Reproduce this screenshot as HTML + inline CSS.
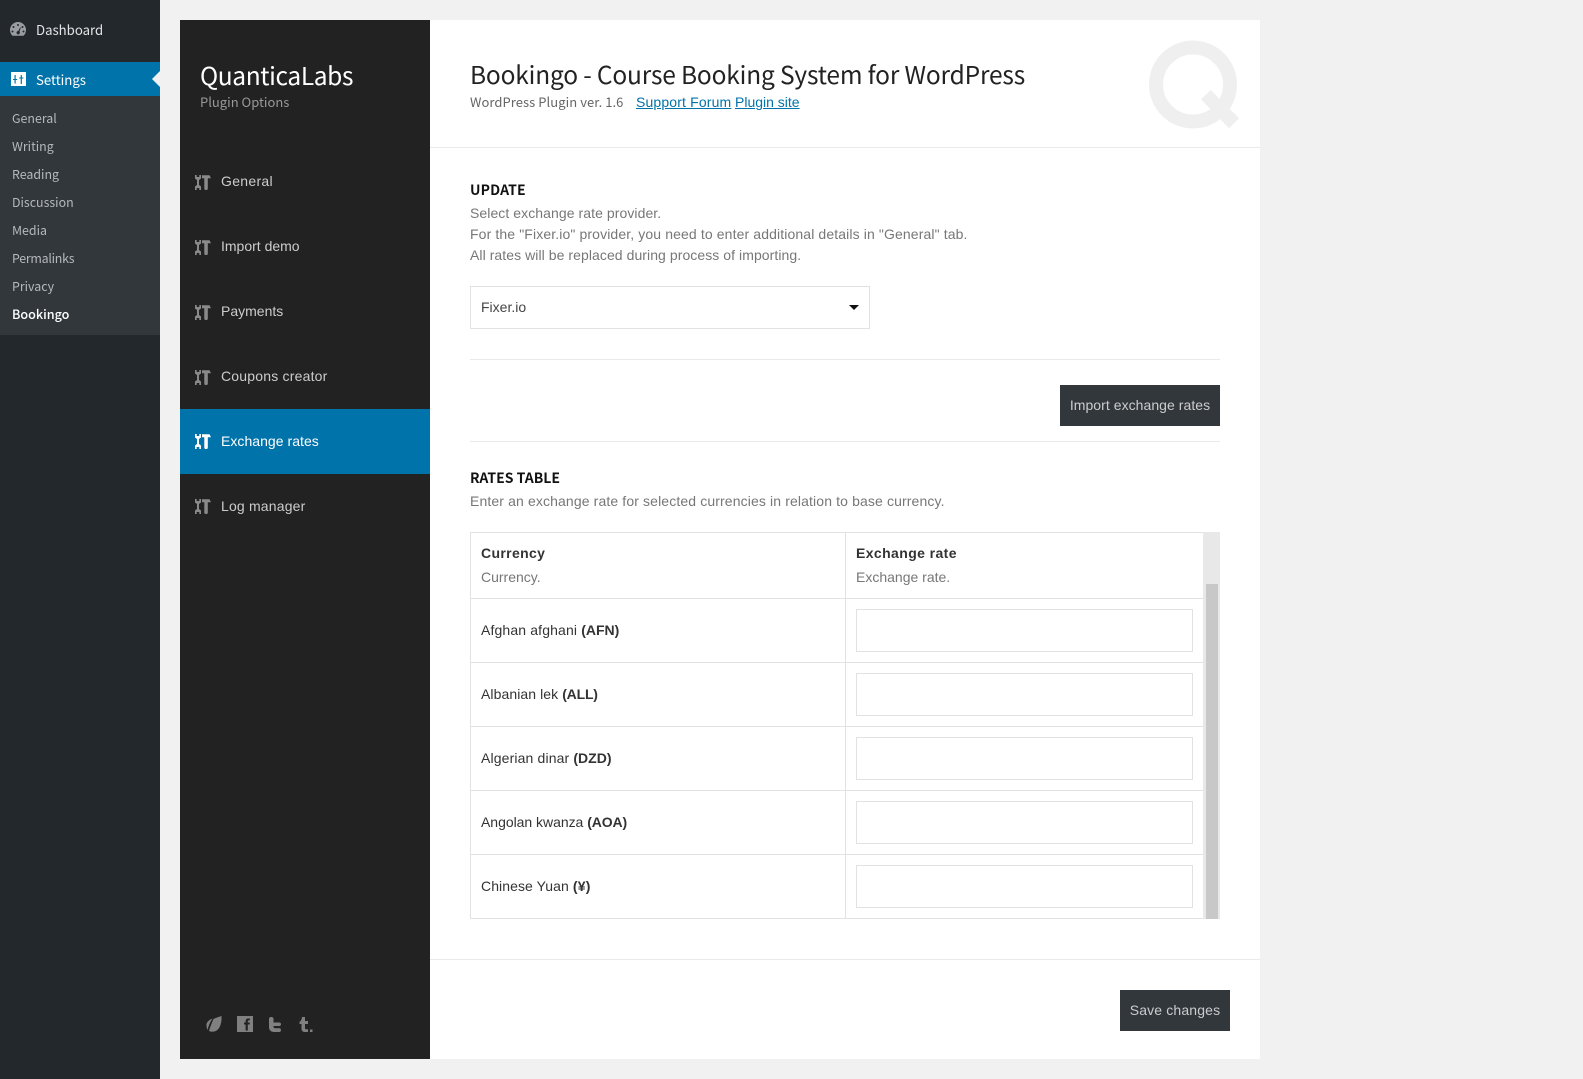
<!DOCTYPE html>
<html><head><meta charset="utf-8"><title>Bookingo</title>
<style>
html,body{margin:0;padding:0;width:1583px;height:1079px;overflow:hidden;background:#f1f1f1;font-family:"Liberation Sans",Arial,sans-serif;font-size:14px}
div,span,a,svg{position:absolute}
b,i{position:static}
.t{white-space:nowrap;line-height:20px;height:20px}
.o{font-family:"Noto Sans CJK JP","DejaVu Sans",sans-serif}
.sub{left:12px;font-size:12.4px;color:#b4b9be;line-height:20px}
.nav{left:221px;color:#ccc;font-size:14px}
.ln{background:#e9e9e9;height:1px}
.b{background:#e2e2e2}
.d{color:#777;font-size:14px;left:470px;letter-spacing:.11px}
.c{color:#333;left:481px}
.c b{font-weight:bold}
.in{left:856px;width:335px;height:41px;border:1px solid #e2e2e2;background:#fff}
.btn{background:#32373c;color:#ccc;height:41px;line-height:40px;text-align:center;font-size:14px}
svg.ic{left:195px;width:16px;height:15px}
</style></head><body>
<svg width="0" height="0" style="position:absolute"><defs>
<symbol id="tool" viewBox="0 0 16 15"><path d="M0 0h1.700v2h2.600V0H6v3.500L4 5v5l2 1.500V15H4.300v-2H1.700v2H0v-3.500L2 10V5L0 3.500z"/><path d="M7 .3h7.500L16 3.300h-3.200v10.500a1.200 1.200 0 0 1-1.200 1.200h-1.100a1.200 1.200 0 0 1-1.200-1.200V3.300H7z"/></symbol>
</defs></svg>

<!-- WP sidebar -->
<div style="left:0;top:0;width:160px;height:1079px;background:#23282d"></div>
<svg style="left:10px;top:22px" width="16" height="14" viewBox="0 0 16 14"><path fill="#9a9ea2" fill-rule="evenodd" d="M8 0a8 8 0 0 1 8 8c0 2.300-1 4.400-2.500 5.800H2.500A8 8 0 0 1 0 8a8 8 0 0 1 8-8zM8 2a1 1 0 1 0 0 2 1 1 0 0 0 0-2zM3.500 4a1 1 0 1 0 0 2 1 1 0 0 0 0-2zM12.500 4a1 1 0 1 0 0 2 1 1 0 0 0 0-2zM2.500 8.500a1 1 0 1 0 0 2 1 1 0 0 0 0-2zM13.500 8.500a1 1 0 1 0 0 2 1 1 0 0 0 0-2zM10.300 5.200 8.300 9a1.700 1.700 0 1 0 1.200.6l1.400-4.200z"/></svg>
<span class="t o" style="left:36px;top:20px;font-size:13.2px;color:#e3e4e5">Dashboard</span>
<div style="left:0;top:62px;width:160px;height:34px;background:#0073aa"></div>
<svg style="left:11px;top:72px" width="15" height="14" viewBox="0 0 15 14"><path fill="#fff" fill-rule="evenodd" d="M0 0h15v14H0zM3.500 3v4H2v1h1.500v3.500h1.200V8h1.500V7H4.700V3zM9.700 3v2.500H8.200v1h1.500v5.500h1.200V6.500h1.500v-1h-1.500V3z"/></svg>
<span class="t o" style="left:36px;top:70px;font-size:13.2px;color:#fff">Settings</span>
<svg style="left:152px;top:71px" width="8" height="16" viewBox="0 0 8 16"><path fill="#f1f1f1" d="M8 0v16L0 8z"/></svg>
<div style="left:0;top:96px;width:160px;height:239px;background:#32373c"></div>
<span class="t o sub" style="top:108px">General</span>
<span class="t o sub" style="top:136px">Writing</span>
<span class="t o sub" style="top:164px">Reading</span>
<span class="t o sub" style="top:192px">Discussion</span>
<span class="t o sub" style="top:220px">Media</span>
<span class="t o sub" style="top:248px;letter-spacing:-.25px">Permalinks</span>
<span class="t o sub" style="top:276px">Privacy</span>
<span class="t o sub" style="top:304px;color:#fff;font-weight:500;font-size:12.6px">Bookingo</span>

<!-- Plugin panel -->
<div style="left:180px;top:20px;width:250px;height:1039px;background:#222"></div>
<span class="t o" style="left:200px;top:66px;font-size:24.5px;letter-spacing:-.37px;color:#fff">QuanticaLabs</span>
<span class="t o" style="left:200px;top:92px;font-size:13px;color:#999">Plugin Options</span>
<div style="left:180px;top:409px;width:250px;height:65px;background:#0073aa"></div>
<svg class="ic" style="top:175px" fill="#8a8a8a"><use href="#tool"/></svg>
<svg class="ic" style="top:240px" fill="#8a8a8a"><use href="#tool"/></svg>
<svg class="ic" style="top:305px" fill="#8a8a8a"><use href="#tool"/></svg>
<svg class="ic" style="top:370px" fill="#8a8a8a"><use href="#tool"/></svg>
<svg class="ic" style="top:434px" fill="#fff"><use href="#tool"/></svg>
<svg class="ic" style="top:499px" fill="#8a8a8a"><use href="#tool"/></svg>
<span class="t nav" style="top:171px;letter-spacing:.3px">General</span>
<span class="t nav" style="top:236px">Import demo</span>
<span class="t nav" style="top:301px">Payments</span>
<span class="t nav" style="top:366px;letter-spacing:.2px">Coupons creator</span>
<span class="t nav" style="top:431px;color:#fff;letter-spacing:.04px">Exchange rates</span>
<span class="t nav" style="top:496px;letter-spacing:.18px">Log manager</span>
<svg style="left:206px;top:1016px" width="16" height="16" viewBox="0 0 16 16"><path fill="#808080" d="M6.500 2.500C3 4 0 6 .5 10c.1 1.500.5 3 1 4C2.500 10 4 6 6.500 2.500z"/><path fill="#808080" d="M15.500 0c-3 1-6 2-8 3C6 6.500 4 11 3 15c1 .5 3 1 5 .5 6-1 8-9 7.500-15.500z"/></svg>
<svg style="left:237px;top:1016px" width="16" height="16" viewBox="0 0 16 16"><path fill="#808080" fill-rule="evenodd" d="M0 0h16v16H0zM8.600 14.500h2.200V8.500h1.800l.3-2h-2.100V5.300c0-.6.200-.9.900-.9h1.200V2.600c-.3 0-.9-.1-1.600-.1-1.600 0-2.700 1-2.700 2.700v1.300H7v2h1.600z"/></svg>
<svg style="left:269px;top:1017px" width="12" height="15" viewBox="0 0 12 15"><path fill="#808080" d="M0 1.800C0 .7.900 0 2.200 0S4.500.7 4.500 1.800V5.500h5.800c1 0 1.700.7 1.700 1.700S11.300 9 10.300 9H4.500v.5c0 1.200.6 1.700 1.700 1.700h4.100c1 0 1.700.7 1.700 1.900S11.300 15 10.300 15H5c-3.200 0-5-2-5-5z"/></svg>
<svg style="left:299px;top:1017px" width="14" height="15" viewBox="0 0 14 15"><path fill="#808080" d="M3 0h3v4h3v3H6v4c0 1 .4 1.300 1.200 1.300H9V15H6c-2.300 0-3.500-1.100-3.500-3.500V7H.5V4.800C2 4.300 2.800 2 3 0zM11 12.500h2.500V15H11z"/></svg>

<!-- Main -->
<div style="left:430px;top:20px;width:830px;height:1039px;background:#fff"></div>
<svg style="left:1140px;top:30px" width="110" height="110" viewBox="1140 30 110 110"><circle cx="1193" cy="84.500" r="37" fill="none" stroke="#efefef" stroke-width="14"/><path fill="#efefef" d="M1201 99.300 1210.700 90 1239 118.300 1229 128.300z"/></svg>
<span class="t o" style="left:470px;top:65px;font-size:24.5px;letter-spacing:-.17px;color:#222">Bookingo - Course Booking System for WordPress</span>
<span class="t o" style="left:470px;top:92px;font-size:13px;letter-spacing:.06px;color:#666">WordPress Plugin ver. 1.6</span>
<a class="t" style="left:636px;top:92px;color:#0073aa;text-decoration:underline;letter-spacing:.15px">Support Forum</a>
<a class="t" style="left:735px;top:92px;color:#0073aa;text-decoration:underline">Plugin site</a>
<div class="ln" style="left:430px;top:147px;width:830px"></div>

<span class="t o" style="left:470px;top:180px;font-size:14px;font-weight:700;letter-spacing:.15px;color:#111">UPDATE</span>
<span class="t d" style="top:203px;letter-spacing:.07px">Select exchange rate provider.</span>
<span class="t d" style="top:224px;letter-spacing:.12px">For the "Fixer.io" provider, you need to enter additional details in "General" tab.</span>
<span class="t d" style="top:245px;letter-spacing:.065px">All rates will be replaced during process of importing.</span>
<div style="left:470px;top:286px;width:398px;height:41px;border:1px solid #e2e2e2"></div>
<span class="t" style="left:481px;top:297px;color:#444">Fixer.io</span>
<svg style="left:849px;top:305px" width="10" height="5" viewBox="0 0 10 5"><path d="M0 0h10L5 5z" fill="#111"/></svg>
<div class="ln" style="left:470px;top:359px;width:750px"></div>
<div class="btn" style="left:1060px;top:385px;width:160px;letter-spacing:.05px">Import exchange rates</div>
<div class="ln" style="left:470px;top:441px;width:750px"></div>

<span class="t o" style="left:470px;top:468px;font-size:14px;font-weight:700;color:#111">RATES TABLE</span>
<span class="t d" style="top:491px;letter-spacing:.125px">Enter an exchange rate for selected currencies in relation to base currency.</span>

<!-- table -->
<div class="b" style="left:470px;top:532px;width:733px;height:1px"></div>
<div class="b" style="left:470px;top:532px;width:1px;height:387px"></div>
<div class="b" style="left:845px;top:532px;width:1px;height:387px"></div>
<div class="b" style="left:470px;top:598px;width:733px;height:1px"></div>
<div class="b" style="left:470px;top:662px;width:733px;height:1px"></div>
<div class="b" style="left:470px;top:726px;width:733px;height:1px"></div>
<div class="b" style="left:470px;top:790px;width:733px;height:1px"></div>
<div class="b" style="left:470px;top:854px;width:733px;height:1px"></div>
<div class="b" style="left:470px;top:918px;width:733px;height:1px"></div>
<div style="left:1203px;top:532px;width:17px;height:387px;background:#e8e8e8"></div>
<div style="left:1206px;top:584px;width:12px;height:335px;background:#c8c8c8"></div>
<span class="t" style="left:481px;top:543px;font-weight:bold;color:#333;letter-spacing:.35px">Currency</span>
<span class="t" style="left:481px;top:567px;color:#777">Currency.</span>
<span class="t" style="left:856px;top:543px;font-weight:bold;color:#333;letter-spacing:.4px">Exchange rate</span>
<span class="t" style="left:856px;top:567px;color:#777">Exchange rate.</span>
<span class="t c" style="top:620px;letter-spacing:.14px">Afghan afghani <b style="letter-spacing:0">(AFN)</b></span>
<span class="t c" style="top:684px;letter-spacing:.08px">Albanian lek <b style="letter-spacing:-.2px">(ALL)</b></span>
<span class="t c" style="top:748px;letter-spacing:.14px">Algerian dinar <b style="letter-spacing:0">(DZD)</b></span>
<span class="t c" style="top:812px;letter-spacing:-.03px">Angolan kwanza <b style="letter-spacing:-.1px">(AOA)</b></span>
<span class="t c" style="top:876px;letter-spacing:.08px">Chinese Yuan <b style="letter-spacing:.2px">(¥)</b></span>
<div class="in" style="top:609px"></div>
<div class="in" style="top:673px"></div>
<div class="in" style="top:737px"></div>
<div class="in" style="top:801px"></div>
<div class="in" style="top:865px"></div>

<div class="ln" style="left:430px;top:959px;width:830px"></div>
<div class="btn" style="left:1120px;top:990px;width:110px;letter-spacing:.15px">Save changes</div>
</body></html>
